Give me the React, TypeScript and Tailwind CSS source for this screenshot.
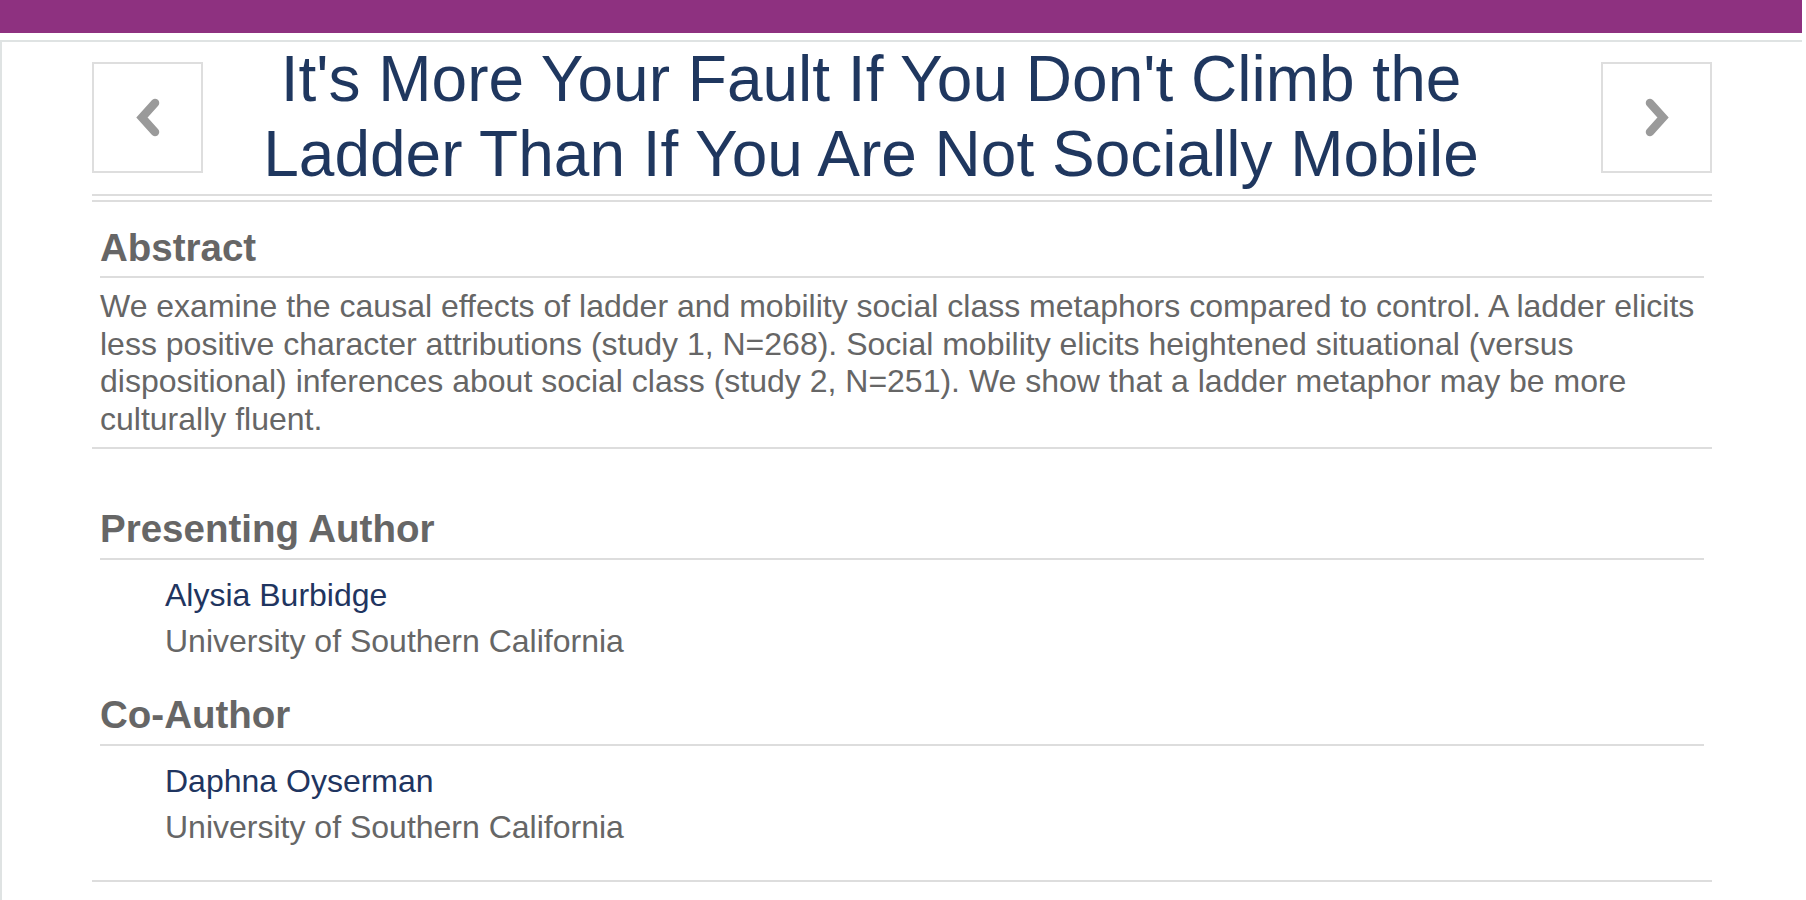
import React from "react";

function Chevron({ dir }: { dir: "left" | "right" }) {
  const points = dir === "left" ? "20,5 7,19.5 20,34" : "6,5 19,19.5 6,34";
  return (
    <svg width="26" height="39" viewBox="0 0 26 39" aria-hidden="true">
      <polyline
        points={points}
        fill="none"
        stroke="#9a9a9a"
        strokeWidth="8.5"
        strokeLinecap="round"
        strokeLinejoin="miter"
      />
    </svg>
  );
}

function NavButton({ dir }: { dir: "left" | "right" }) {
  return (
    <button
      type="button"
      aria-label={dir === "left" ? "Previous" : "Next"}
      className="flex h-[111px] w-[111px] shrink-0 items-center justify-center border-2 border-[#dedede] bg-white"
    >
      <Chevron dir={dir} />
    </button>
  );
}

type Person = { name: string; affiliation: string };

function AuthorGroup({ title, people, first }: { title: string; people: Person[]; first?: boolean }) {
  return (
    <div className={first ? "mt-[58px]" : "mt-[29px]"}>
      <h4 className="border-b-2 border-[#dddddd] pb-[7px] text-[38.5px] font-bold leading-[44px] text-[#666666]">
        {title}
      </h4>
      <div className="mt-[12px] pl-[65px]">
        {people.map((p) => (
          <div key={p.name} className="text-[32px] leading-[46px]">
            <div className="text-[#1f3560]">{p.name}</div>
            <div className="text-[#666666]">{p.affiliation}</div>
          </div>
        ))}
      </div>
    </div>
  );
}

export default function App() {
  return (
    <div className="h-[900px] overflow-hidden bg-white font-['Liberation_Sans',Arial,sans-serif]">
      <div className="h-[33px] w-[1802px] bg-[#8e3180]" />
      <div className="mt-[7px] h-[860px] w-[1802px] border-l-2 border-t-2 border-[#dfe3e3]">
        <div className="ml-[90px] w-[1620px]">
          <header className="border-b-2 border-[#dddddd] pb-[2px]">
            <div className="flex items-center">
              <NavButton dir="left" />
              <h1 className="flex-1 pr-[62px] text-center text-[64px] font-normal leading-[75px] text-[#1f375f]">
                It's More Your Fault If You Don't Climb the Ladder Than If You Are Not Socially Mobile
              </h1>
              <NavButton dir="right" />
            </div>
          </header>
          <div className="mt-[4px] h-[2px] bg-[#dddddd]" />

          <section className="border-b-2 border-[#dddddd] px-[8px] pb-[8px]">
            <h4 className="mt-[24px] border-b-2 border-[#dddddd] pb-[6px] text-[38.5px] font-bold leading-[44px] text-[#666666]">
              Abstract
            </h4>
            <p className="mt-[10px] text-[32px] leading-[37.7px] text-[#666666]">
              We examine the causal effects of ladder and mobility social class metaphors compared to control. A ladder
              elicits less positive character attributions (study 1, N=268). Social mobility elicits heightened
              situational (versus dispositional) inferences about social class (study 2, N=251). We show that a ladder
              metaphor may be more culturally fluent.
            </p>
          </section>

          <section className="border-b-2 border-[#dddddd] px-[8px] pb-[30px]">
            <AuthorGroup
              first
              title="Presenting Author"
              people={[{ name: "Alysia Burbidge", affiliation: "University of Southern California" }]}
            />
            <AuthorGroup
              title="Co-Author"
              people={[{ name: "Daphna Oyserman", affiliation: "University of Southern California" }]}
            />
          </section>
        </div>
      </div>
    </div>
  );
}
